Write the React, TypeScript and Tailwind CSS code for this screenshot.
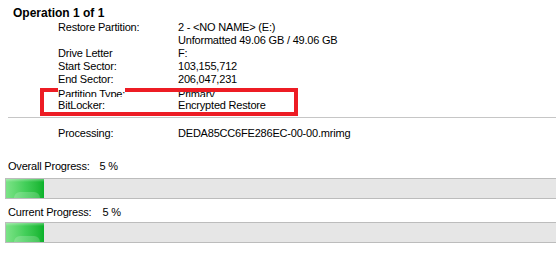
import React from "react";

function Row({ label, value }: { label: string; value: string }) {
  return (
    <div className="flex h-[13px] leading-[13px]">
      <div className="w-[120px] shrink-0">{label}</div>
      <div className="whitespace-nowrap">{value}</div>
    </div>
  );
}

function Bar() {
  return (
    <div className="ml-[5px] h-[21px] border-t border-b border-l border-[#bcbcbc] bg-[#e6e6e6] flex">
      <div className="relative h-full w-[38px] bg-gradient-to-r from-[#7be387] via-[#43cf5a] to-[#08b22a] overflow-hidden">
        <div className="absolute inset-x-0 top-0 h-[3px] bg-gradient-to-b from-[#ffffff55] to-transparent" />
        <div className="absolute left-[8px] right-[4px] bottom-0 h-[6px] rounded-t-full bg-[#ffffff30]" />
      </div>
    </div>
  );
}

export default function App() {
  return (
    <div
      className="relative w-[556px] h-[254px] bg-white overflow-hidden text-black text-[11px] tracking-[-0.2px]"
      style={{ fontFamily: '"Liberation Sans", Arial, sans-serif' }}
    >
      <div className="pl-[13px] pt-[5px] leading-[16px] text-[12px] font-bold tracking-normal">
        Operation 1 of 1
      </div>
      <div className="pl-[58px]">
        <Row label="Restore Partition:" value={"2 - <NO NAME> (E:)"} />
        <Row label="" value="Unformatted 49.06 GB / 49.06 GB" />
        <Row label="Drive Letter" value="F:" />
        <Row label="Start Sector:" value="103,155,712" />
        <Row label="End Sector:" value="206,047,231" />
        <div className="h-[11px] overflow-hidden">
          <div className="flex h-[13px] leading-[13px] pt-[2px]">
            <div className="w-[120px] shrink-0">
              <span className="relative z-20 bg-white inline-block h-[13px]">Partition Type:</span>
            </div>
            <div className="whitespace-nowrap">Primary</div>
          </div>
        </div>
        <div className="mt-[2px] bg-white relative">
          <Row label="BitLocker:" value="Encrypted Restore" />
        </div>
      </div>
      <div className="ml-[8px] mt-[5px] h-px bg-[#c6c6c6]" />
      <div className="pl-[58px] mt-[9px]">
        <Row label="Processing:" value="DEDA85CC6FE286EC-00-00.mrimg" />
      </div>
      <div className="pl-[8px] mt-[20px] leading-[13px] h-[13px]">
        Overall Progress:<span className="ml-[10px]">5 %</span>
      </div>
      <div className="mt-[5px]">
        <Bar />
      </div>
      <div className="pl-[8px] mt-[7px] leading-[13px] h-[13px]">
        Current Progress:<span className="ml-[11px]">5 %</span>
      </div>
      <div className="mt-[3px]">
        <Bar />
      </div>
      <div className="absolute left-[40px] top-[88px] w-[258px] h-[28px] border-4 border-[#ed1c24] z-10 pointer-events-none" />
    </div>
  );
}
